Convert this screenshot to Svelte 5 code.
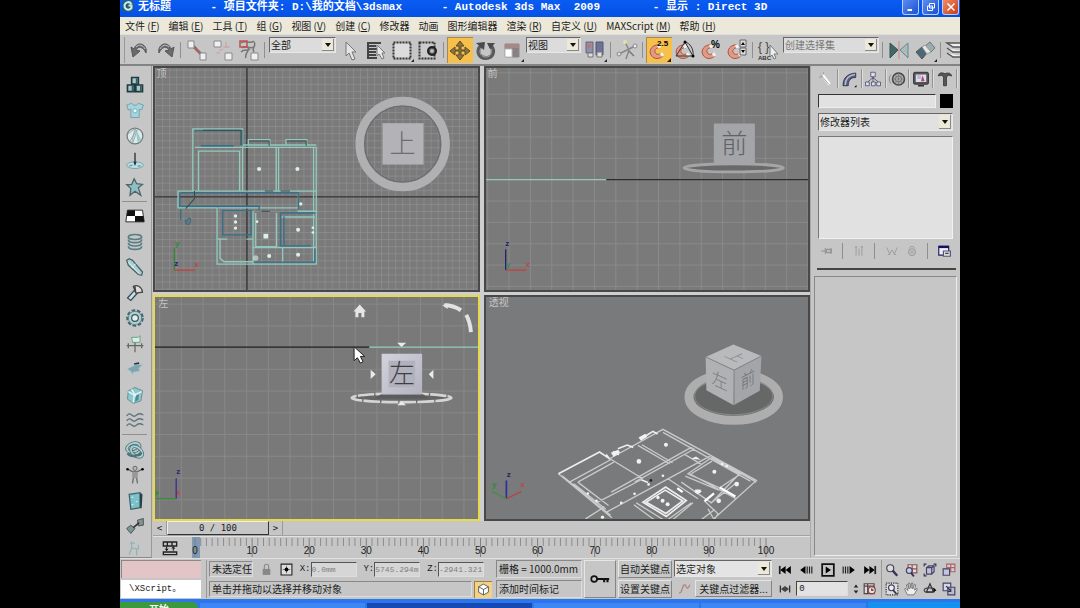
<script>
  const title =
    "无标题      - 项目文件夹: D:\\我的文档\\3dsmax      - Autodesk 3ds Max  2009        - 显示 : Direct 3D";

  const menus = [
    ["文件", "F"],
    ["编辑", "E"],
    ["工具", "T"],
    ["组", "G"],
    ["视图", "V"],
    ["创建", "C"],
    ["修改器", ""],
    ["动画", ""],
    ["图形编辑器", ""],
    ["渲染", "R"],
    ["自定义", "U"],
    ["MAXScript", "M"],
    ["帮助", "H"],
  ];

  // main toolbar, left to right; "|" is a separator
  const toolbar = [
    "undo", "redo", "|", "link", "unlink", "bind", "|",
    { label: "选择过滤器", value: "全部", kind: "filter" },
    "cursor", "byname", "region", "crossing", "|",
    "move", "rotate", "scale",
    { label: "参考坐标系", value: "视图", kind: "coords" },
    "pivot", "|", "manipulate", "|",
    "snap", "angle", "percent", "spinner", "|", "named",
    { label: "命名选择集", value: "创建选择集", kind: "sets" },
    "|", "mirror", "align", "|", "layers",
  ];
  const pressed = ["move", "snap"];

  const sideTools = [
    "boxes", "shirt", "ball", "water", "star", "|",
    "checker", "spring", "tube", "hinge", "gear", "vane", "fish", "crate", "waves", "|",
    "knot", "figure", "book", "joints", "ghost",
  ];

  const panelTabs = ["create", "modify", "hierarchy", "motion", "display", "utilities"];
  const navTools = ["zoom", "zoomall", "extents", "extentsall", "zoomregion", "pan", "orbit", "maximize"];

  const ticks = Array.from({ length: 101 }, (_, i) => i);
  const tickX = (i) => 42 + i * 5.71;

  const magnet =
    '<path d="M12 7C6 6 1 12 4 17c3 5 9 4 12 1l-2-3c-2 2-5 2-6-1-1-2 2-5 5-4z" fill="#e29a86" stroke="#a8553f"/><path d="M11 7l2 3M16 18l-2-3" stroke="#f2f2f2" stroke-width="3"/>';

  const icons = {
    undo: '<path d="M4 9l2 10 7-6-4-1c2-4 7-4 10 3 2-9-9-13-12-4z" fill="#6c6c6c" stroke="#555"/><path d="M9 9c3-3 7-2 9 2" stroke="#c0c0c0" fill="none"/>',
    redo: '<path d="M21 9l-2 10-7-6 4-1c-2-4-7-4-10 3-2-9 9-13 12-4z" fill="#6c6c6c" stroke="#555"/><path d="M7 11c2-4 6-5 9-2" stroke="#c0c0c0" fill="none"/>',
    link: '<path d="M8 8l9 9" stroke="#b0615c" stroke-width="3"/><path d="M10 8l5 8" stroke="#777"/><path d="M3 3h6v7H3zM15 15h6v7h-6z" fill="#f0f0f4" stroke="#888"/>',
    unlink: '<path d="M3 3h7v6H3zM14 15h7v7h-7z" fill="#f0f0f4" stroke="#888"/><path d="M5 15h4M15 4v6M12 9h7M8 13l4-2" stroke="#c6a0a0"/>',
    bind: '<path d="M4 5c5-4 8 2 13-2M5 10c5-4 8 3 13-2M4 14c4-4 6 0 9-3M11 9c2 5-4 6-2 11M17 4c3 4-3 5 0 10" stroke="#777" fill="none" stroke-width="1.500"/><path d="M3 3h7v6H3z" stroke="#c05050" fill="none" stroke-width="1.500"/><path d="M14 15h7v7h-7z" fill="#f0f0f4" stroke="#888"/>',
    cursor: '<path d="M8 4v14l3-3 3 7 3-1-3-7h4z" fill="#e4e4e4" stroke="#777"/>',
    byname: '<path d="M4 4v17M5 5h12M5 8h7M5 11h8M5 14h7M5 17h7M5 20h8" stroke="#444" stroke-width="2"/><path d="M13 7v11l2-2 3 5 2-1-2-5h3z" fill="#e8e8e8" stroke="#777"/>',
    region: '<path d="M3.500 4.500h17v16h-17z" fill="#dcdcdc" stroke="#333" stroke-width="2" stroke-dasharray="2 1"/><path d="M24 21v3h-3z" fill="#222"/>',
    crossing: '<path d="M3.500 4.500h15v16h-15z" fill="#ccc" stroke="#333" stroke-width="2" stroke-dasharray="2 1"/><circle cx="16" cy="13" r="4" fill="#555" stroke="#222" stroke-width="2"/><circle cx="16" cy="13" r="2" fill="#bbb"/>',
    move: '<path d="M12 3l4 5h-3v4h4V9l5 4-5 4v-4h-4v4h3l-4 5-4-5h3v-4H7v4l-5-4 5-4v3h4V8H8z" fill="#8a7440" stroke="#5d4d28"/>',
    rotate: '<path d="M7 8c-5 5-2 12 5 12s9-7 5-12" fill="none" stroke="#5a5a5a" stroke-width="4"/><path d="M7 10c-3 5 1 9 5 9 5 0 6-5 5-8" fill="none" stroke="#aaa"/><path d="M2 5l9-1-1 8zM13 5h8l-5 6z" fill="#4a4a4a"/>',
    scale: '<path d="M5 6h14v13H5z" fill="#8a8083" stroke="#888"/><path d="M5 6h14v4H5z" fill="#a98689"/><path d="M5 11h7v8H5z" fill="#fff" stroke="#bbb"/><path d="M24 21v3h-3z" fill="#222"/>',
    pivot: '<path d="M3 4h7v11H3z" fill="#8e91a8" stroke="#667"/><path d="M13 4h7v13h-7z" fill="#6d7296" stroke="#557"/><path d="M5 15h5v4H5zM14 14h5v5h-5z" fill="#ddd" stroke="#777"/><circle cx="6" cy="8" r="2" fill="#b77"/><path d="M24 21v3h-3z" fill="#222"/>',
    manipulate: '<path d="M10 4l4 8-3 9M4 16l8-4 8-4" stroke="#888" fill="none" stroke-width="1.500"/><circle cx="10" cy="4" r="2" fill="#e5dfa8"/><circle cx="20" cy="8" r="2" fill="#eee" stroke="#888"/><circle cx="4" cy="16" r="2" fill="#ddd" stroke="#888"/><path d="M14 13l5 5" stroke="#777" stroke-width="1.500"/>',
    snap: magnet + '<text x="10" y="8" font-size="8" font-weight="700" font-family="Liberation Sans, sans-serif">2.5</text><path d="M24 20v4h-4z" fill="#222"/>',
    angle: magnet + '<path d="M3 18L12 4l8 14H3M12 4c5 1 9 7 8 14" fill="none" stroke="#333"/><circle cx="12" cy="4" r="1.500"/><circle cx="20" cy="18" r="1.500"/>',
    percent: magnet + '<text x="12" y="10" font-size="10" font-weight="700" font-family="Liberation Sans, sans-serif">%</text>',
    spinner: magnet + '<path d="M15 2h6v7h-6zM15 10h6v7h-6z" fill="#ddd" stroke="#666"/><path d="M16 7l2-3 2 3zM16 12l2 3 2-3z"/>',
    named: '<text x="1" y="13" font-size="12" font-family="Liberation Sans, sans-serif" fill="#444">{ }</text><text x="1" y="22" font-size="6" font-weight="700" font-family="Liberation Sans, sans-serif" fill="#333">ABC</text><path d="M13 7v12l2-2 2 4 2-1-2-4h4z" fill="#eee" stroke="#777"/>',
    mirror: '<path d="M3 5l8 7-8 8z" fill="#466" stroke="#355"/><path d="M21 5l-8 7 8 8z" fill="#a9bcbc" stroke="#688"/><path d="M12 3v18" stroke="#c88"/>',
    align: '<path d="M12 8l5-4 5 6-5 5z" fill="#9aabb4" stroke="#777"/><path d="M3 14l6-5 5 6-5 6z" fill="#4d6977" stroke="#555"/><path d="M9 9l3-2 6 7-4 2z" fill="#e8e8e8" stroke="#999"/><path d="M24 21v3h-3z" fill="#222"/>',
    layers: '<path d="M2 5h14l6 4H8zM2 10l6 4h14M2 15l6 4h14" fill="#eee" stroke="#555" stroke-width="1.500"/>',

    boxes: '<path d="M8 3h8v8H8zM3 12h8v8H3zM13 12h8v8h-8z" fill="#a4c9cc" stroke="#1f3b40" stroke-width="2"/><path d="M14 4v7M9 13v7M19 13v7" stroke="#3b5b60" stroke-width="2"/>',
    shirt: '<path d="M2 6l6-2c2 3 6 3 8 0l6 2-2 6-3-1v10H7V11l-3 1z" fill="#a5d4dc" stroke="#6b9aa5"/><circle cx="12" cy="13" r="2.500" fill="#e9ffff" stroke="#6aa"/>',
    ball: '<circle cx="12" cy="12" r="9.500" fill="#dfe9ea" stroke="#6f7c7e" stroke-width="1.500"/><path d="M12 3L8 20M15 4L9 21M3 10l9-7 7 15M6 18l8-13" stroke="#8ba0a4" fill="none"/><path d="M13 5l6 11-4 4z" fill="#9cc"/>',
    water: '<ellipse cx="12" cy="17" rx="10" ry="4" fill="#b9e0e4" stroke="#6b9da2"/><path d="M12 2v14" stroke="#223" stroke-width="1.500"/><path d="M10 13h4l-2 5z" fill="#334"/><path d="M5 18l4-1M15 18h4" stroke="#478"/>',
    star: '<path d="M11 2l3 6 7 1-5 4 3 9-7-5-6 5 1-8-5-5h6z" fill="#8fbfc4" stroke="#4b6466" stroke-width="1.500"/>',
    checker: '<path d="M3 5h18l2 14H1z" fill="#fff" stroke="#111"/><path d="M3 5h9v7H2zM12 12h10l1 7H12z" fill="#111"/>',
    spring: '<g fill="none" stroke="#567f84" stroke-width="2"><ellipse cx="12" cy="6" rx="8" ry="3"/><path d="M4 9c0 5 16 5 16 0M4 13c0 5 16 5 16 0M4 17c0 5 16 5 16 0"/></g>',
    tube: '<path d="M2 4l3-2 4 2 12 14-1 4-4-1L4 10z" fill="#a6cfd2" stroke="#4b6265" stroke-width="1.500"/><path d="M8 13l5-5M4 6l13 14" stroke="#e8f6f6"/>',
    hinge: '<path d="M3 18l8-9 4 3-8 9z" fill="#bce3e5" stroke="#445" stroke-width="1.500"/><path d="M10 4c5-2 10 0 11 7l-8 1zM13 12l-1-8" fill="#ddd" stroke="#444" stroke-width="1.500"/>',
    gear: '<circle cx="12" cy="12" r="8.500" fill="#a5c5c8" stroke="#48676b" stroke-width="4" stroke-dasharray="4 2"/><circle cx="12" cy="12" r="8" fill="#afd0d3" stroke="#5d8085"/><circle cx="12" cy="12" r="4" fill="#e3eeee" stroke="#3f565a" stroke-width="1.500"/>',
    vane: '<path d="M2 14h20M12 4v18M4 11v6M20 11v6" stroke="#666" stroke-width="1.500"/><path d="M8 4h8l2-2v8H9z" fill="#d8efe9" stroke="#5a9a78"/>',
    fish: '<path d="M2 12l10-5 10-1-5 5 1 4-8 1-1 4-2-5z" fill="#7fa6b0" stroke="#b4cccf"/><path d="M11 6l6-1" stroke="#234" stroke-width="2"/>',
    crate: '<path d="M4 7l8-4 9 4-2 12-9 3-7-5z" fill="#8fc7cf" stroke="#5a828a"/><path d="M4 8l7 4 9-4M11 12l-1 9M8 5l7 12" stroke="#e3fafa" stroke-width="1.500" fill="none"/><path d="M13 13l4-2-1 7-4 2z" fill="#4f8a96"/>',
    waves: '<path d="M2 7q3-4 6-1t6 0 8 0M2 13q3-4 6-1t6 0 8 0M2 19q3-4 6-1t6 0 8 0" fill="none" stroke="#5c7478" stroke-width="1.500"/>',
    knot: '<g fill="none"><ellipse cx="10" cy="9" rx="8" ry="5" transform="rotate(-20 10 9)" stroke="#4f7377" stroke-width="4"/><ellipse cx="10" cy="9" rx="8" ry="5" transform="rotate(-20 10 9)" stroke="#b0d6da" stroke-width="2"/><ellipse cx="14" cy="14" rx="8" ry="5" transform="rotate(40 14 14)" stroke="#4f7377" stroke-width="4"/><ellipse cx="14" cy="14" rx="8" ry="5" transform="rotate(40 14 14)" stroke="#b0d6da" stroke-width="2"/><path d="M3 16c4 5 12 4 17-1" stroke="#4f7377" stroke-width="3"/></g>',
    figure: '<path d="M3 5l6 3h6l6-3M10 8v8l-1 6M14 8v8l1 6" stroke="#666" stroke-width="1.500" fill="none"/><path d="M9 8h6v8H9z" fill="#999"/><circle cx="12" cy="4" r="2.500" fill="#bbb" stroke="#555"/><circle cx="3" cy="5" r="1.500"/><circle cx="21" cy="5" r="1.500"/>',
    book: '<path d="M5 4l13-2v18L7 22z" fill="#7cc0c9" stroke="#3b646a" stroke-width="1.500"/><path d="M18 2l3 2-1 17-2-1z" fill="#264248"/><path d="M9 7v1M9 16v1M14 12v1" stroke="#eff" stroke-width="2"/>',
    joints: '<path d="M2 15l5-4 5 4-5 6zM15 5l7-2v8l-6 1z" fill="#7d9795" stroke="#444"/><path d="M10 14l7-6" stroke="#333" stroke-width="2"/>',
    ghost: '<path d="M8 4v8l-3 8M8 12l6 1v8M6 6h6M16 8v6" stroke="#8fb5b5" stroke-width="1.500" fill="none"/>',

    create: '<path d="M8 6l10 13" stroke="#fff" stroke-width="4"/><path d="M6 6l11 13M4 10l5-2M10 3L9 7" stroke="#888"/>',
    modify: '<path d="M4 21c0-10 5-16 17-17v6c-7 0-10 4-10 11z" fill="#565d7e" stroke="#222c4c"/><path d="M7 20C7 12 12 7 20 6" stroke="#bbc" stroke-width="2" fill="none"/><path d="M22 20v3h-3z"/>',
    hierarchy: '<path d="M12 8v4M12 10l-7 6M12 10l7 6M12 10v7" stroke="#446"/><path d="M9 3h6v6H9zM2 16h5v5H2zM10 16h5v5h-5zM17 16h5v5h-5z" fill="#dde" stroke="#446"/>',
    motion: '<circle cx="14" cy="12" r="8" fill="#aaa" stroke="#444" stroke-width="2"/><circle cx="14" cy="12" r="4" fill="#ccc" stroke="#555"/><path d="M14 4v16M6 12h16M8 6l12 12M20 6L8 18" stroke="#777"/><path d="M4 6c-3 4-3 8 0 12" stroke="#777" fill="none"/>',
    display: '<rect x="2" y="3" width="20" height="16" rx="2" fill="#555" stroke="#222"/><path d="M5 6h14v10H5z" fill="#dde"/><path d="M7 7h5v5H7z" fill="#b8b8d8"/><path d="M12 15l2-8 3 8z" fill="#b46"/><path d="M8 21h8" stroke="#333" stroke-width="2"/>',
    utilities: '<path d="M3 8c1-5 5-5 9-3 4-2 8-1 9 3l-4-1-3 2v12h-4V9L7 7z" fill="#555" stroke="#333"/>',

    zoom: '<circle cx="9" cy="9" r="6" fill="#ddd" stroke="#445" stroke-width="2"/><path d="M13 13l8 9" stroke="#335" stroke-width="4"/>',
    zoomall: '<path d="M7 3h15v14H7zM14 3v14M7 10h15" fill="#e6d8d8" stroke="#855" stroke-width="2"/><circle cx="9" cy="13" r="5" fill="#ccd" stroke="#446" stroke-width="2"/><path d="M12 17l5 6" stroke="#335" stroke-width="3"/>',
    extents: '<path d="M6 8l4-3h9v10l-4 4H6zM6 8h9v11M15 8l4-3" fill="#c0c0d8" stroke="#446" stroke-width="2"/><path d="M2 6V2h4M18 2h4v4M2 18v4h4" fill="none" stroke="#335" stroke-width="2"/>',
    extentsall: '<path d="M8 2h14v13H8zM15 2v13M8 8h14" fill="#dccccc" stroke="#a66" stroke-width="2"/><path d="M2 10h11v11H2z" fill="#c5c5e0" stroke="#446" stroke-width="2"/>',
    zoomregion: '<path d="M2 2h20v20H2z" fill="#ddd" stroke="#222" stroke-width="2" stroke-dasharray="2 2"/><circle cx="11" cy="10" r="5" fill="#eee" stroke="#446" stroke-width="2"/><path d="M14 14l6 7" stroke="#335" stroke-width="3"/>',
    pan: '<path d="M6 22L1 12l2-1 4 4-3-10 2-1 3 8-1-10h2l2 9 1-9h2v10l3-8 2 1-2 9 4-3 1 1-6 10z" fill="#eee" stroke="#444"/>',
    orbit: '<path d="M12 3l-6 14h12z" fill="#ccc" stroke="#333" stroke-width="2"/><ellipse cx="11" cy="14" rx="9" ry="4" fill="none" stroke="#445" stroke-width="2"/><path d="M18 10l5 4-5 3z"/>',
    maximize: '<path d="M2 2h13v13H2z" fill="#d5d5e8" stroke="#446" stroke-width="2"/><path d="M10 9h12v13H10z" fill="#bbc" stroke="#446" stroke-width="2"/><path d="M7 7l8 8M15 11v5h-5" stroke="#335" stroke-width="2" fill="none"/>',

    start: '<path d="M3 5v14" stroke="#222" stroke-width="3"/><path d="M13 5v14L4 12zM22 5v14l-9-7z"/>',
    prev: '<path d="M11 5v14L2 12z"/><path d="M14 6v12M18 6v12M22 6v12" stroke="#222" stroke-width="2"/>',
    play: '<path d="M2 2h20v20H2z" fill="none" stroke="#111" stroke-width="3"/><path d="M8 6v12l9-6z"/>',
    next: '<path d="M13 5v14l9-7z"/><path d="M2 6v12M6 6v12M10 6v12" stroke="#222" stroke-width="2"/>',
    end: '<path d="M21 5v14" stroke="#222" stroke-width="3"/><path d="M11 5v14l9-7zM2 5v14l9-7z"/>',
    keymode: '<path d="M4 6v12M20 6v12" stroke="#222" stroke-width="2"/><path d="M12 7v10l-7-5zM12 7v10l7-5z" fill="#444"/>',
    timeconfig: '<path d="M2 3h17v17H2zM2 7h17M8 3v17" fill="#ddd" stroke="#544" stroke-width="2"/><circle cx="15" cy="14" r="6" fill="#edd" stroke="#844" stroke-width="2"/><path d="M15 11v3h3" fill="none" stroke="#333" stroke-width="2"/>',
    key: '<circle cx="5" cy="12" r="3.500" fill="none" stroke="#111" stroke-width="2"/><path d="M8 12h15M17 12v4M21 12v4" stroke="#111" stroke-width="2.500"/>',
    curve: '<path d="M2 20C9 22 7 4 12 5s3 14 10 0" fill="none" stroke="#b77" stroke-width="2"/><path d="M5 16l10-12" stroke="#999"/>',
    lock: '<rect x="5" y="11" width="14" height="11" fill="#888"/><path d="M8 11V6c0-5 8-5 8 0v5" fill="none" stroke="#888" stroke-width="2"/>',
    offset: '<path d="M2 2h20v20H2z" fill="#ddd" stroke="#222" stroke-width="2"/><path d="M12 5v14M5 12h14" stroke="#222"/><circle cx="12" cy="12" r="3.500"/>',
    cube: '<path d="M12 2l9 5v10l-9 5-9-5V7z" fill="#fff" stroke="#444" stroke-width="1.500"/><path d="M3 7l9 5 9-5M12 12v10" fill="none" stroke="#444" stroke-width="1.500"/>',
    trackbar: '<path d="M2 3h20v6H2zM2 18h20v4H2z" fill="none" stroke="#222" stroke-width="2"/><path d="M8 3v6M15 3v6" stroke="#222" stroke-width="2"/><path d="M7 10v5M17 16v-5M5 13l2 3 2-3M15 13l2-3 2 3" stroke="#111" fill="none" stroke-width="1.500"/>',
    pin: '<path d="M2 12h7M9 7v10M11 9h8v6h-8zM19 7v10" stroke="#888" fill="#bbb" stroke-width="1.500"/>',
    result: '<path d="M7 4v16M12 8v12M17 4v16M5 5h4M15 5h4" stroke="#999" stroke-width="1.500"/>',
    unique: '<path d="M3 6l5 11 4-7 4 7 5-11M5 18h4M15 18h4" fill="none" stroke="#999" stroke-width="1.500"/>',
    remove: '<circle cx="12" cy="14" r="6" fill="#bbb" stroke="#999" stroke-width="1.500"/><path d="M7 8c1-5 9-5 10 0M10 14h4" fill="none" stroke="#999" stroke-width="1.500"/>',
    configure: '<path d="M3 4h17v15H3z" fill="#eee" stroke="#226" stroke-width="2"/><path d="M3 5h17" stroke="#116" stroke-width="4"/><path d="M11 12h12v9H11z" fill="#ddd" stroke="#557" stroke-width="2"/><path d="M14 16h6" stroke="#335" stroke-width="2"/>',
    minimize: '<path d="M5 18h9" stroke="#fff" stroke-width="4"/>',
    restore: '<path d="M9 5h10v9H9zM5 10h10v9H5z" fill="#2e6be0" stroke="#fff" stroke-width="2"/>',
    close: '<path d="M5 5l14 14M19 5L5 19" stroke="#fff" stroke-width="3"/>',
  };
</script>

{#snippet icon(name)}
  <svg class="icon" viewBox="0 0 24 24" aria-hidden="true">{@html icons[name]}</svg>
{/snippet}

{#snippet combo(label, value, kind)}
  <span class="combo {kind}">
    <select aria-label={label}><option>{value}</option></select>
    <span class="arrow"></span>
  </span>
{/snippet}

<div class="screen">
  <div class="window">
    <header class="titlebar">
      <svg class="logo" viewBox="0 0 24 24" aria-hidden="true">
        <rect x="1" y="1" width="22" height="22" rx="4" fill="#27606d" />
        <path d="M19 8C14 1 5 5 5 12s9 10 14 4v-5h-6" fill="none" stroke="#cfe9ea" stroke-width="4" />
      </svg>
      <h1>{title}</h1>
      <div class="window-buttons">
        <button aria-label="最小化">{@render icon("minimize")}</button>
        <button aria-label="还原">{@render icon("restore")}</button>
        <button class="close" aria-label="关闭">{@render icon("close")}</button>
      </div>
    </header>

    <nav class="menubar">
      {#each menus as [name, key]}
        <button>{name}{#if key}&nbsp;(<u>{key}</u>){/if}</button>
      {/each}
    </nav>

    <div class="toolbar">
      {#each toolbar as item}
        {#if item === "|"}
          <span class="sep"></span>
        {:else if item.kind}
          {@render combo(item.label, item.value, item.kind)}
        {:else}
          <button class="tool" class:pressed={pressed.includes(item)} aria-label={item}>
            {@render icon(item)}
          </button>
        {/if}
      {/each}
    </div>

    <div class="workspace">
      <div class="sidebar">
        {#each sideTools as item}
          {#if item === "|"}
            <span class="hsep"></span>
          {:else}
            <button aria-label={item}>{@render icon(item)}</button>
          {/if}
        {/each}
      </div>

      <main>
        <div class="viewports">
          <!-- top -->
          <svg class="viewport" viewBox="9 3 978 672" preserveAspectRatio="xMidYMid slice">
            <defs>
              <pattern id="fine" x="292" y="392" width="21" height="21" patternUnits="userSpaceOnUse">
                <path d="M0 1.500h21M1.500 0v21" stroke="#a0a0a0" stroke-width="2" />
              </pattern>
            </defs>
            <rect width="990" height="690" fill="#7a7a7a" />
            <rect width="990" height="690" fill="url(#fine)" opacity=".6" />
            <path d="M292 0v690M0 392h990" stroke="#303030" stroke-width="4" />
            <g fill="none" stroke-width="4">
              <path d="M131 375V190h148v185M137 245h140M148 375V256h122v119M280 245h218v347H203V425H87v-50h411M280 238h218M379 245v130M386 245v130M296 240v-18h64v18M408 240v-18h62v18M445 377v58h52M310 435v155M380 440v100H318V440M204 518h30M290 518h22M212 515v60l12 10h90M312 543h185M398 543v46M394 452h100M207 425h240M490 245v340" stroke="#91c9bd" />
              <path d="M137 195h140v46M155 240h98M95 380h350v52M92 380v40h236v12M220 433v72h84v-72zM390 440h105M392 440v98h90M402 450v85M95 430v30M312 586h182v-40M109 460c0 18 14 18 15 3s-12-4-10 5" stroke="#376f88" />
              <path d="M162 194h112v44M298 226h60v14M410 226h58v14M136 375v22l-26 30M345 375h25M392 375h28M335 435h25" stroke="#334c4c" stroke-width="3" />
            </g>
            <g fill="#dcf0e9">
              <circle cx="328" cy="309" r="6" /><circle cx="442" cy="309" r="6" />
              <circle cx="258" cy="449" r="5" /><circle cx="258" cy="467" r="5" /><circle cx="258" cy="485" r="5" />
              <path d="M341 502h14v14h-14z" /><circle cx="444" cy="490" r="6" /><circle cx="444" cy="564" r="6" />
              <circle cx="358" cy="568" r="6" /><circle cx="452" cy="413" r="5" />
              <circle cx="488" cy="484" r="4" /><circle cx="488" cy="498" r="4" /><circle cx="322" cy="466" r="4" />
              <circle cx="318" cy="574" r="8" opacity=".6" />
            </g>
            <circle cx="755" cy="235" r="128" fill="none" stroke="#b0b0b2" stroke-width="25" />
            <circle cx="755" cy="235" r="113" fill="none" stroke="#6c6c6f" stroke-width="3" />
            <rect x="695" y="173" width="122" height="123" fill="#b3b3b7" />
            <text class="cube" x="755" y="262" fill="#6d6d74">上</text>
            <path d="M76 610V545" stroke="#348a34" stroke-width="4" />
            <path d="M76 610h62" stroke="#c24343" stroke-width="4" />
            <text class="axis" x="78" y="538" fill="#348a34">y</text>
            <text class="axis" x="136" y="600" fill="#c24343">x</text>
            <text class="axis" x="76" y="599" fill="#22226e">z</text>
            <text class="name" x="23" y="37">顶</text>
          </svg>

          <!-- front -->
          <svg class="viewport" viewBox="9 3 978 672" preserveAspectRatio="xMidYMid slice">
            <defs>
              <pattern id="front" x="22" y="22" width="63.500" height="63.500" patternUnits="userSpaceOnUse">
                <path d="M0 1.500h64M1.500 0v64" stroke="#909090" stroke-width="3" />
              </pattern>
            </defs>
            <rect width="990" height="690" fill="#7a7a7a" />
            <rect width="990" height="690" fill="url(#front)" opacity=".7" />
            <path d="M0 341h378" stroke="#8fcabc" stroke-width="4" />
            <path d="M376 341h620" stroke="#2c2c2c" stroke-width="4" />
            <ellipse cx="755" cy="306" rx="148" ry="12" fill="#696969" stroke="#a5a5a7" stroke-width="8" />
            <rect x="696" y="174" width="122" height="121" fill="#a3a5a8" />
            <text class="cube" x="757" y="261" fill="#616267">前</text>
            <path d="M77 610V548" stroke="#22226e" stroke-width="4" />
            <path d="M77 610h62" stroke="#c24343" stroke-width="4" />
            <text class="axis" x="76" y="537" fill="#22226e">z</text>
            <text class="axis" x="136" y="600" fill="#c24343">x</text>
            <text class="axis" x="78" y="600" fill="#2f8a5a">y</text>
            <text class="name" x="23" y="37">前</text>
          </svg>

          <!-- left, active -->
          <svg class="viewport active" viewBox="6 6 984 681" preserveAspectRatio="xMidYMid slice">
            <defs>
              <pattern id="left" x="90" y="32" width="65.500" height="65.500" patternUnits="userSpaceOnUse">
                <path d="M0 1.500h66M1.500 0v66" stroke="#8e8e8c" stroke-width="3" />
              </pattern>
              <linearGradient id="face" x2="1" y2="1">
                <stop offset="0" stop-color="#d3d3df" /><stop offset="1" stop-color="#b3b3c0" />
              </linearGradient>
            </defs>
            <rect width="996" height="696" fill="#797979" />
            <rect width="996" height="696" fill="url(#left)" opacity=".7" />
            <path d="M0 163h658" stroke="#1d1d1d" stroke-width="4" />
            <path d="M658 163h340" stroke="#8fcabc" stroke-width="4" />
            <path d="M610 56l19-21 19 21h-5v17h-9V60h-9v13h-9V56z" fill="#e6e6e6" />
            <g fill="none" stroke="#e2e2e2" stroke-width="12">
              <path d="M884 37q27 0 50 15M950 66q12 22 14 52" />
            </g>
            <path d="M878 37l16-6v17z" fill="#e2e2e2" />
            <ellipse cx="755" cy="316" rx="150" ry="13" fill="#666" stroke="#d5d5d5" stroke-width="8" stroke-dasharray="50 4" />
            <path d="M695 304h123l22 14H672z" fill="#5c5c5e" />
            <rect x="695" y="183" width="122" height="123" fill="url(#face)" />
            <rect x="716" y="204" width="80" height="80" fill="#b2b2bd" />
            <text class="cube" x="756" y="272" fill="#3e3e45">左</text>
            <path d="M742 150h27l-14 13zM742 338h27l-14-12zM662 231v28l15-14zM851 231v28l-14-14z" fill="#ebebeb" />
            <path d="M612 162v42l10-9 9 16 8-4-8-16h13z" fill="#fff" stroke="#222" stroke-width="3" />
            <path d="M76 620V558" stroke="#3a2f96" stroke-width="4" />
            <path d="M14 620h62" stroke="#318f3a" stroke-width="4" />
            <text class="axis" x="76" y="546" fill="#2b257c">z</text>
            <text class="axis" x="76" y="608" fill="#c24343">x</text>
            <path d="M14 594l12 8-12 9z" fill="#318f3a" />
            <text class="name" x="23" y="43">左</text>
          </svg>

          <!-- perspective -->
          <svg class="viewport" viewBox="9 9 978 678" preserveAspectRatio="xMidYMid slice">
            <rect width="990" height="696" fill="#787a7b" />
            <ellipse cx="757" cy="315" rx="134" ry="70" fill="#666767" stroke="#aeaeaf" stroke-width="27" />
            <ellipse cx="757" cy="312" rx="117" ry="56" fill="none" stroke="#858585" stroke-width="3" />
            <path d="M673 195l83-37 84 34-82 43z" fill="#b9babb" />
            <path d="M673 195l85 40-1 105-82-45z" fill="#b0b1b3" />
            <path d="M840 192l-82 43-1 105 78-44z" fill="#a4a5a8" />
            <path d="M673 195l85 40 82-43M758 235v104" fill="none" stroke="#838487" stroke-width="3" />
            <text class="cube small" transform="matrix(.9 .42 0 1 715 286)" fill="#7b7d83">左</text>
            <text class="cube small" transform="matrix(.8 -.42 0 1 800 282)" fill="#6c6e74">前</text>
            <text class="cube small" transform="matrix(.8 .36 -.8 .36 748 202)" fill="#7b7d83">上</text>
            <g fill="none" stroke="#c9caca" stroke-width="4">
              <path d="M385 500l160-88 280 153-130 117M232 545l160 132M313 680l57-36M243 551l145 118M265 570l125-68 95 58M290 570l108-60M290 570l92 70M278 575l96 76M470 460l95 55M482 458l92 54M480 563L345 632M635 463L390 600M690 490L372 662M610 487l50 30M640 470L460 570M545 421l262 146M465 632l80 50M458 638l60 44M690 495l135 75M620 545l70-48 85 50-60 40zM630 545l62-38M625 545l140 75M612 552l100 42M600 570l90 62 85-88M690 632l75-60M560 560l90 60M668 625l42 40-12 18M560 682l70-50M575 682l60-50M650 690l50-38M680 650l18 32" />
              <path d="M232 545l123-65 32 21M375 487l10 14M410 470l28-11 18 7M395 478l18 10M493 432l22-14 14 8M480 563l20 8M485 630l68-45 62 40-60 48zM495 630l57-36 52 32-50 38z" stroke="#eee" stroke-width="5" />
              <path d="M715 586l47 27M670 627l28-23M588 588l16 12" stroke="#fff" stroke-width="7" />
            </g>
            <g fill="#f2f2f2">
              <path d="M389 482l22-9 6 8-20 13zM472 436l20-11 6 9-19 12z" />
              <path d="M630 500l14-7 14 10z" />
              <circle cx="554" cy="458" r="6" /><circle cx="473" cy="508" r="7" />
              <circle cx="699" cy="539" r="6" /><circle cx="766" cy="576" r="7" /><circle cx="712" cy="626" r="7" />
              <path d="M642 592h15l4 7-12 7-9-6z" />
              <circle cx="530" cy="616" r="5" /><circle cx="544" cy="626" r="6" /><circle cx="559" cy="636" r="6" />
              <circle cx="545" cy="551" r="4" /><circle cx="502" cy="577" r="4" /><circle cx="460" cy="605" r="4" />
              <circle cx="420" cy="632" r="4" /><circle cx="320" cy="604" r="4" /><circle cx="346" cy="626" r="4" />
              <circle cx="364" cy="675" r="5" /><circle cx="722" cy="516" r="4" /><circle cx="736" cy="522" r="4" />
            </g>
            <circle cx="509" cy="565" r="4" fill="#222" />
            <path d="M76 620V565" stroke="#2f2f9a" stroke-width="5" />
            <path d="M76 620l45-22" stroke="#b84444" stroke-width="4" />
            <path d="M76 620l-44-22" stroke="#4c8a4c" stroke-width="4" />
            <text class="axis" x="77" y="554" fill="#222266">z</text>
            <text class="axis" x="118" y="586" fill="#c24343">x</text>
            <text class="axis" x="33" y="586" fill="#348a34">y</text>
            <text class="name" x="23" y="43">透视</text>
          </svg>
        </div>

        <div class="timeslider">
          <button aria-label="上一帧">&lt;</button>
          <button class="thumb">0 / 100</button>
          <button aria-label="下一帧">&gt;</button>
        </div>

        <div class="trackbar">
          <button aria-label="打开迷你曲线编辑器">{@render icon("trackbar")}</button>
          <svg viewBox="30 0 627 22" preserveAspectRatio="xMinYMin meet">
            <rect x="39" y="0" width="8" height="21" fill="#7f9ab4" />
            {#each ticks as i}
              <line x1={tickX(i)} x2={tickX(i)} y1="1" y2={i % 10 ? 9 : 20} stroke={i % 10 ? "#8c8c8c" : "#808080"} />
              {#if i % 10 === 0}
                <text x={tickX(i)} y="17">{i}</text>
              {/if}
            {/each}
          </svg>
        </div>
      </main>

      <aside>
        <div class="tabs">
          {#each panelTabs as tab}
            <button aria-label={tab}>{@render icon(tab)}</button>
          {/each}
        </div>
        <div class="object-name">
          <input aria-label="对象名称" />
          <button class="swatch" aria-label="对象颜色"></button>
        </div>
        {@render combo("修改器列表", "修改器列表", "modifiers")}
        <div class="stack"></div>
        <div class="stack-tools">
          <button aria-label="锁定堆栈">{@render icon("pin")}</button>
          <span class="sep"></span>
          <button aria-label="显示最终结果">{@render icon("result")}</button>
          <span class="sep"></span>
          <button aria-label="使唯一">{@render icon("unique")}</button>
          <button aria-label="移除修改器">{@render icon("remove")}</button>
          <span class="sep"></span>
          <button aria-label="配置修改器集">{@render icon("configure")}</button>
        </div>
        <div class="rollouts"></div>
      </aside>
    </div>

    <footer class="status">
      <div class="listener">
        <div class="macro"></div>
        <input aria-label="MAXScript 侦听器" value="\XScript。" />
      </div>

      <div class="info">
        <div class="coords-row">
          <span class="field selection">未选定任</span>
          <button class="mini" aria-label="锁定选择">{@render icon("lock")}</button>
          <button class="mini" aria-label="绝对模式">{@render icon("offset")}</button>
          <label>X:<input value="0.0mm" /></label>
          <label>Y:<input value="5745.294m" /></label>
          <label>Z:<input value="-2941.321" /></label>
        </div>
        <div class="prompt-row">
          <span class="field prompt">单击并拖动以选择并移动对象</span>
          <button class="mini degrade" aria-label="自适应降级">{@render icon("cube")}</button>
        </div>
      </div>

      <div class="grid-info">
        <span class="field">栅格 = 1000.0mm</span>
        <span class="field">添加时间标记</span>
      </div>

      <button class="raised setkeys" aria-label="设置关键点">{@render icon("key")}</button>

      <div class="keys">
        <button class="raised">自动关键点</button>
        <button class="raised">设置关键点</button>
      </div>

      <div class="filters">
        {@render combo("关键点对象", "选定对象", "target")}
        <div class="filter-row">
          <button class="mini" aria-label="切线">{@render icon("curve")}</button>
          <button class="raised">关键点过滤器...</button>
        </div>
      </div>

      <div class="playback">
        <div>
          {#each ["start", "prev", "play", "next", "end"] as name}
            <button aria-label={name}>{@render icon(name)}</button>
          {/each}
        </div>
        <div>
          <button aria-label="关键点模式">{@render icon("keymode")}</button>
          <input aria-label="当前帧" value="0" />
          <svg class="updown" viewBox="0 0 8 14" aria-hidden="true">
            <path d="M1 5l3-4 3 4zM1 9l3 4 3-4z" fill="#222" />
          </svg>
          <button aria-label="时间配置">{@render icon("timeconfig")}</button>
        </div>
      </div>

      <div class="nav">
        {#each navTools as name}
          <button aria-label={name}>{@render icon(name)}</button>
        {/each}
      </div>
    </footer>

    <div class="taskbar">
      <button class="start">开始</button>
      <span class="task"></span>
      <span class="task dark"></span>
      <span class="task"></span>
      <span class="task"></span>
      <span class="tray"></span>
    </div>
  </div>
</div>

<style>
  :global(body) {
    margin: 0;
    background: #000;
  }

  .screen {
    height: 100vh;
    padding: 0 calc(100% / 9);
    box-sizing: border-box;
    font-family: "Noto Sans CJK SC", sans-serif;
    font-size: 10px;
    line-height: 14px;
    color: #1c1c1c;
  }

  .window {
    display: flex;
    flex-direction: column;
    height: 100%;
    overflow: hidden;
    background: #c6c6c6;
  }

  button,
  input,
  select {
    box-sizing: border-box;
    margin: 0;
    padding: 0;
    border: 0;
    border-radius: 0;
    background: none;
    font: inherit;
    color: inherit;
  }

  button {
    display: flex;
    align-items: center;
    justify-content: center;
    white-space: nowrap;
  }

  .icon {
    display: block;
    flex: none;
    width: 20px;
    height: 20px;
  }

  /* title and menus */
  .titlebar {
    display: flex;
    flex: none;
    height: 17px;
    background: linear-gradient(#0a5cf2, #0450e4);
    overflow: hidden;
  }

  .logo {
    width: 12px;
    height: 12px;
    margin: 0 4px 0 2px;
  }

  h1 {
    flex: 1;
    margin: 0;
    font: bold 11px/14px "Liberation Mono", "Noto Sans CJK SC", monospace;
    color: #fff;
    white-space: pre;
  }

  .window-buttons {
    display: flex;
    gap: 3px;
    padding-right: 1px;
  }

  .window-buttons button {
    width: 17px;
    height: 15px;
    border: 1px solid #b9cdf6;
    border-top: 0;
    border-radius: 0 0 3px 3px;
    background: linear-gradient(135deg, #5b8df2, #1c50cf);
  }

  .window-buttons .close {
    background: linear-gradient(135deg, #ee8c68, #c93c14);
  }

  .window-buttons .icon {
    width: 12px;
    height: 12px;
  }

  .menubar {
    display: flex;
    flex: none;
    gap: 9px;
    height: 17px;
    padding: 0 5px;
    background: #ece9db;
  }

  /* main toolbar */
  .toolbar {
    display: flex;
    flex: none;
    align-items: center;
    height: 32px;
    padding-left: 4px;
    box-sizing: border-box;
    border-top: 1px solid #dedede;
    border-bottom: 2px solid #838383;
    overflow: hidden;
  }

  .toolbar::before {
    content: "";
    flex: none;
    width: 1px;
    height: 26px;
    margin-right: 1px;
    background: #999;
  }

  .tool {
    flex: none;
    width: 26px;
    height: 26px;
  }

  .tool .icon {
    width: 24px;
    height: 24px;
  }

  .tool.pressed {
    background: #f7c04b;
    box-shadow: inset 1px 1px #a88a4c;
  }

  .sep {
    flex: none;
    width: 1px;
    height: 16px;
    margin: 0 3px 0 2px;
    background: #8f8f8f;
  }

  .combo {
    position: relative;
    display: block;
    height: 16px;
    box-sizing: border-box;
    border: 1px solid;
    border-color: #666 #e8e8e8 #e8e8e8 #666;
    background: #dcdcdc;
  }

  .combo select {
    display: block;
    width: 100%;
    height: 100%;
    padding-left: 1px;
    appearance: none;
  }

  .arrow {
    position: absolute;
    top: 1px;
    right: 1px;
    bottom: 1px;
    display: grid;
    place-items: center;
    width: 12px;
    background: #ece9d8;
    box-shadow: inset -1px -1px #888;
    pointer-events: none;
  }

  .arrow::before {
    content: "";
    border: 3px solid transparent;
    border-top: 4px solid #111;
    border-bottom: 0;
  }

  .toolbar .combo {
    align-self: flex-start;
    flex: none;
    margin: 2px 1px 0;
  }

  .toolbar .filter {
    width: 67px;
  }

  .toolbar .coords {
    width: 55px;
  }

  .toolbar .sets {
    width: 96px;
    color: #777;
  }

  /* work area */
  .workspace {
    display: grid;
    grid-template-columns: 33px 1fr 150px;
    flex: 1;
    min-height: 0;
  }

  .sidebar {
    display: flex;
    flex-direction: column;
    min-height: 0;
    margin-right: 1px;
    padding: 6px 2px 0 0;
    border-right: 1px solid #999;
    border-bottom: 1px solid #888;
    overflow: hidden;
  }

  .sidebar button {
    flex: 1 1 0;
    min-height: 0;
  }

  .sidebar button:last-child {
    flex: 0 0 18px;
    overflow: hidden;
  }

  .hsep {
    flex: none;
    height: 1px;
    margin: 1px 2px 2px;
    background: #8f8f8f;
  }

  main {
    display: flex;
    flex-direction: column;
    min-width: 0;
    min-height: 0;
  }

  .viewports {
    display: grid;
    grid-template: 1fr 1fr / 1fr 1fr;
    flex: 1;
    gap: 3px 4px;
    min-height: 0;
    background: #cfcfcf;
  }

  .viewport {
    display: block;
    width: 100%;
    height: 100%;
    min-height: 0;
    outline: 2px solid #484848;
    outline-offset: -2px;
  }

  .viewport.active {
    outline-color: #e6d94c;
  }

  .viewport text {
    font-family: "Noto Sans CJK SC", sans-serif;
  }

  .viewport .name {
    font-size: 30px;
    fill: #c4c4c4;
  }

  .viewport .axis {
    font-family: "Liberation Sans", sans-serif;
    font-size: 24px;
    font-weight: bold;
  }

  .viewport .cube {
    font-size: 78px;
    font-weight: 300;
    text-anchor: middle;
  }

  .viewport .small {
    font-size: 54px;
  }

  .timeslider {
    display: flex;
    flex: none;
    height: 14px;
    border-bottom: 1px solid #a2a2a2;
    font: 9px/12px "DejaVu Sans Mono", monospace;
  }

  .timeslider button {
    width: 14px;
    height: 14px;
    border-right: 1px solid #999;
  }

  .timeslider .thumb {
    width: 102px;
    border: 1px solid;
    border-color: #eee #333 #333 #eee;
  }

  .trackbar {
    display: flex;
    flex: none;
    height: 21px;
    border-top: 1px solid #e2e2e2;
  }

  .trackbar button {
    flex: none;
    width: 30px;
    padding-left: 4px;
  }

  .trackbar .icon {
    width: 16px;
    height: 18px;
  }

  .trackbar svg:not(.icon) {
    flex: 1;
    min-width: 0;
    height: 22px;
  }

  .trackbar text {
    font: 10px "Liberation Sans", sans-serif;
    text-anchor: middle;
    fill: #222;
  }

  /* command panel */
  aside {
    display: flex;
    flex-direction: column;
    min-height: 0;
    padding: 3px 3px 2px;
    border-left: 1px solid #aaa;
  }

  .tabs {
    display: grid;
    grid-template-columns: repeat(6, 1fr);
    height: 19px;
  }

  .tabs button {
    border-right: 1px solid #929292;
    box-shadow: 1px 0 #ddd;
  }

  .tabs .icon {
    width: 18px;
    height: 18px;
  }

  .object-name {
    display: flex;
    gap: 4px;
    margin: 6px 4px 5px;
  }

  .object-name input {
    flex: 1;
    min-width: 0;
    height: 14px;
    border: 1px solid;
    border-color: #333 #eee #eee #333;
    background: #e1e1e1;
  }

  .swatch {
    width: 13px;
    height: 14px;
    background: #000;
  }

  aside .combo {
    flex: none;
    height: 18px;
    margin: 0 4px 5px;
    background: #e1e1e1;
  }

  .stack {
    flex: none;
    height: 101px;
    margin: 0 4px;
    border: 1px solid;
    border-color: #777 #f2f2f2 #f2f2f2 #777;
    background: #e1e1e1;
  }

  .stack-tools {
    display: flex;
    align-items: center;
    justify-content: space-around;
    height: 20px;
    margin: 2px 3px 9px;
  }

  .stack-tools .icon {
    width: 14px;
    height: 14px;
  }

  .rollouts {
    flex: 1;
    position: relative;
    margin-top: 6px;
    border: 1px solid;
    border-color: #888 #eee #eee #888;
  }

  .rollouts::before {
    content: "";
    position: absolute;
    top: -9px;
    left: 2px;
    right: 0;
    height: 2px;
    background: #444;
  }

  /* status bar */
  .status {
    display: flex;
    flex: none;
    gap: 2px;
    height: 38px;
    padding: 1px 2px 1px 1px;
    border-top: 1px solid #e0e0e0;
  }

  .listener {
    display: flex;
    flex-direction: column;
    flex: none;
    gap: 2px;
    width: 80px;
    padding-right: 5px;
    border-right: 1px solid #999;
  }

  .macro {
    flex: 1;
    background: #e3c5c8;
    box-shadow: inset 1px 1px #888;
  }

  .listener input {
    flex: 1;
    width: 100%;
    min-height: 0;
    padding-left: 8px;
    background: #fff;
  }

  .listener input,
  .coords-row input,
  .playback input {
    font-family: "Liberation Mono", "Noto Sans CJK SC", monospace;
    font-size: 9px;
  }

  .info,
  .grid-info,
  .keys,
  .filters {
    display: flex;
    flex-direction: column;
    gap: 2px;
  }

  .info {
    flex: 1;
    min-width: 0;
  }

  .coords-row,
  .prompt-row,
  .filter-row {
    display: flex;
    align-items: center;
    flex: 1;
    min-height: 0;
  }

  .coords-row {
    justify-content: space-between;
    padding-right: 10px;
  }

  .field {
    height: 16px;
    padding-left: 2px;
    box-sizing: border-box;
    border: 1px solid;
    border-color: #888 #ddd #ddd #888;
    white-space: nowrap;
    overflow: hidden;
  }

  .selection {
    width: 44px;
  }

  .prompt {
    flex: 1;
  }

  .coords-row label {
    display: flex;
    align-items: center;
    font-family: "Liberation Mono", monospace;
    font-size: 9px;
  }

  .coords-row input {
    width: 46px;
    height: 15px;
    border: 1px solid;
    border-color: #555 #ddd #ddd #555;
    background: #d6d6d6;
    font-size: 8px;
    color: #808080;
  }

  .mini .icon {
    width: 13px;
    height: 13px;
  }

  .degrade {
    width: 18px;
    height: 17px;
    margin: 0 2px;
    background: #f2d289;
    box-shadow: inset 1px 1px #a0803e;
  }

  .grid-info {
    flex: none;
    width: 86px;
  }

  .grid-info .field {
    flex: 1;
    line-height: 15px;
  }

  .raised {
    border: 1px solid;
    border-color: #e6e6e6 #858585 #858585 #e6e6e6;
  }

  .setkeys {
    flex: none;
    width: 32px;
  }

  .keys {
    width: 54px;
  }

  .keys .raised {
    flex: 1;
    min-height: 0;
  }

  .filters {
    width: 98px;
  }

  .target {
    height: 17px;
    background: #e4e4e4;
  }

  .filter-row {
    gap: 4px;
    padding-left: 4px;
  }

  .filter-row .raised {
    flex: 1;
    height: 17px;
  }

  .playback {
    width: 99px;
    padding: 0 2px 0 4px;
  }

  .playback div {
    display: flex;
    align-items: center;
    justify-content: space-between;
    height: 19px;
  }

  .playback .icon {
    width: 14px;
    height: 14px;
  }

  .playback input {
    width: 52px;
    height: 15px;
    padding-left: 2px;
    border: 1px solid;
    border-color: #444 #ddd #ddd #444;
    background: #e2e2e2;
  }

  .updown {
    width: 6px;
    height: 12px;
  }

  .nav {
    display: grid;
    grid-template: 1fr 1fr / repeat(4, 19px);
    border-left: 1px solid #999;
  }

  .nav .icon {
    width: 14px;
    height: 14px;
  }

  /* taskbar */
  .taskbar {
    display: flex;
    flex: none;
    gap: 2px;
    height: 9px;
    background: #2b76ea;
    overflow: hidden;
  }

  .start {
    align-items: flex-start;
    width: 78px;
    height: 20px;
    margin-top: 3px;
    border-radius: 0 6px 0 0;
    background: #3c9a3c;
    font-weight: bold;
    color: #fff;
  }

  .task {
    flex: 1;
    margin-top: 4px;
    background: #3d86f5;
  }

  .task.dark {
    background: #1749b4;
  }

  .tray {
    width: 92px;
    margin-top: 3px;
    background: #1590ee;
  }
</style>
